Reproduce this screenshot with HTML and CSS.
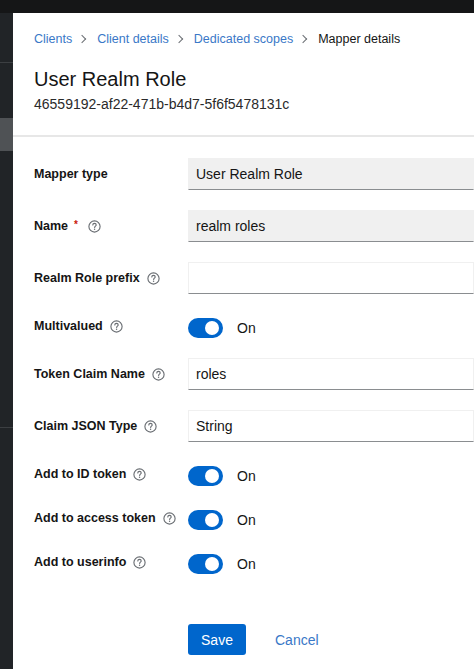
FILE: index.html
```html
<!DOCTYPE html>
<html lang="en">

<head>
    <meta charset="UTF-8">
    <meta name="viewport" content="width=device-width, initial-scale=1.0">
    <title>Mapper details</title>
    <link rel="stylesheet" href="styles.css">
</head>

<body>
    <div class="masthead"></div>
    <div class="layout">
        <nav class="sidebar">
            <div class="nav-sep top"></div>
            <div class="nav-active"></div>
            <div class="nav-sep bottom"></div>
        </nav>

        <main class="page">
            <section class="page-header">
                <ol class="breadcrumb">
                    <li><a href="#">Clients</a></li>
                    <li><a href="#">Client details</a></li>
                    <li><a href="#">Dedicated scopes</a></li>
                    <li class="current">Mapper details</li>
                </ol>
                <h1>User Realm Role</h1>
                <p class="mapper-id">46559192-af22-471b-b4d7-5f6f5478131c</p>
            </section>

            <form class="mapper-form">
                <div class="form-row">
                    <label>Mapper type</label>
                    <input class="text-input readonly" type="text" value="User Realm Role" readonly>
                </div>
                <div class="form-row">
                    <label>Name <span class="required">*</span> <span class="help"></span></label>
                    <input class="text-input readonly" type="text" value="realm roles" readonly>
                </div>
                <div class="form-row">
                    <label>Realm Role prefix <span class="help"></span></label>
                    <input class="text-input" type="text" value="">
                </div>
                <div class="form-row switch-row">
                    <label>Multivalued <span class="help"></span></label>
                    <div class="switch"><span class="toggle"></span><span class="switch-text">On</span></div>
                </div>
                <div class="form-row">
                    <label>Token Claim Name <span class="help"></span></label>
                    <input class="text-input" type="text" value="roles">
                </div>
                <div class="form-row">
                    <label>Claim JSON Type <span class="help"></span></label>
                    <input class="text-input" type="text" value="String">
                </div>
                <div class="form-row switch-row">
                    <label>Add to ID token <span class="help"></span></label>
                    <div class="switch"><span class="toggle"></span><span class="switch-text">On</span></div>
                </div>
                <div class="form-row switch-row">
                    <label>Add to access token <span class="help"></span></label>
                    <div class="switch"><span class="toggle"></span><span class="switch-text">On</span></div>
                </div>
                <div class="form-row switch-row">
                    <label>Add to userinfo <span class="help"></span></label>
                    <div class="switch"><span class="toggle"></span><span class="switch-text">On</span></div>
                </div>

                <div class="actions">
                    <button type="button" class="save-button">Save</button>
                    <a href="#" class="cancel-link">Cancel</a>
                </div>
            </form>
        </main>
    </div>

    <script>
        // same outlined question mark icon next to every label
        const helpIcon = '<svg viewBox="0 0 16 16" width="13" height="13"><circle cx="8" cy="8" r="6.9" fill="none" stroke="#6a6e73" stroke-width="1.4"/><path d="M5.9 6.2c0-1.2.9-2 2.1-2s2.1.8 2.1 1.9c0 1.5-1.9 1.5-1.9 3" fill="none" stroke="#6a6e73" stroke-width="1.4" stroke-linecap="round"/><circle cx="8.1" cy="11.4" r="0.9" fill="#6a6e73"/></svg>';
        document.querySelectorAll('.help').forEach(el => el.innerHTML = helpIcon);
    </script>
</body>

</html>
```

FILE: styles.css
```css
body {
    margin: 0;
    padding: 0;
    font-family: "Liberation Sans", Arial, sans-serif;
    color: #151515;
    background-color: #1b1d21;
    height: 669px;
    overflow: hidden;
}

.masthead {
    height: 13px;
    background-color: #151617;
}

.layout {
    display: flex;
    height: 656px;
}

.sidebar {
    width: 13px;
    flex-shrink: 0;
    background-color: #212427;
}

.nav-sep {
    height: 1px;
    background-color: #3c3f42;
}

.nav-sep.top {
    margin-top: 49px;
}

.nav-active {
    margin-top: 55px;
    height: 33px;
    background-color: #4f5255;
}

.nav-sep.bottom {
    margin-top: 276px;
}

.page {
    flex: 1;
    background-color: #ffffff;
    overflow: hidden;
}

.page-header {
    padding: 17px 0 0 21px;
    height: 105px;
    border-bottom: 2px solid #e7e7e7;
}

.breadcrumb {
    list-style: none;
    margin: 0;
    padding: 0;
    display: flex;
    font-size: 12.5px;
    line-height: 18px;
}

.breadcrumb li {
    display: flex;
    align-items: center;
}

.breadcrumb li + li::before {
    content: "";
    width: 5px;
    height: 5px;
    border-top: 1.5px solid #6a6e73;
    border-right: 1.5px solid #6a6e73;
    transform: rotate(45deg);
    margin: 0 12px 0 7px;
}

.breadcrumb a {
    color: #3a78c7;
    text-decoration: none;
}

.breadcrumb .current {
    color: #151515;
}

.page-header h1 {
    margin: 18px 0 0;
    font-size: 20px;
    font-weight: normal;
    line-height: 26px;
}

.mapper-id {
    margin: 3px 0 0;
    font-size: 14px;
    line-height: 18px;
    color: #2a2a2a;
}

.mapper-form {
    padding: 21px 0 0 21px;
    display: flex;
    flex-direction: column;
    gap: 20px;
}

.form-row {
    display: flex;
    align-items: center;
    height: 32px;
}

.form-row label {
    width: 154px;
    flex-shrink: 0;
    font-size: 12.5px;
    font-weight: bold;
    display: flex;
    align-items: center;
}

.required {
    color: #c9190b;
    margin: 0 3px 0 6px;
    font-size: 10px;
    position: relative;
    top: -2px;
}

.help {
    display: inline-flex;
    margin-left: 7px;
}

.text-input {
    width: 310px;
    height: 32px;
    box-sizing: border-box;
    padding: 0 7px;
    border: 1px solid #f0f0f0;
    border-bottom: 1.5px solid #8a8d90;
    font-family: inherit;
    font-size: 14px;
    color: #151515;
    background-color: #ffffff;
    outline: none;
}

.text-input.readonly {
    background-color: #f0f0f0;
}

.switch-row {
    height: 24px;
    align-items: flex-start;
}

.switch-row label {
    height: 24px;
}

.switch {
    display: flex;
    align-items: center;
    height: 20px;
    margin-top: 4px;
}

.toggle {
    width: 35px;
    height: 20px;
    border-radius: 10px;
    background-color: #0066cc;
    position: relative;
}

.toggle::after {
    content: "";
    position: absolute;
    top: 3px;
    right: 4px;
    width: 14px;
    height: 14px;
    border-radius: 50%;
    background-color: #ffffff;
}

.switch-text {
    margin-left: 14px;
    font-size: 14px;
}

.actions {
    display: flex;
    align-items: center;
    margin: 30px 0 0 154px;
}

.save-button {
    width: 58px;
    height: 31px;
    background-color: #0066cc;
    color: #ffffff;
    border: none;
    border-radius: 3px;
    font-family: inherit;
    font-size: 14px;
    cursor: pointer;
}

.cancel-link {
    margin-left: 29px;
    color: #3a78c7;
    text-decoration: none;
    font-size: 14px;
}
```
